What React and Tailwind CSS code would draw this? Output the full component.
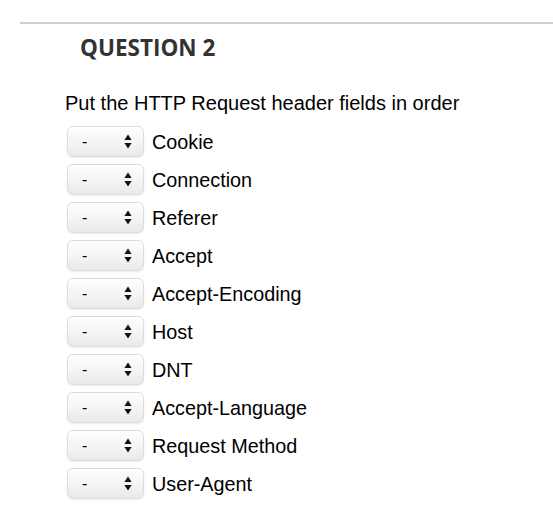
import React from 'react'

const FIELDS = [
  'Cookie',
  'Connection',
  'Referer',
  'Accept',
  'Accept-Encoding',
  'Host',
  'DNT',
  'Accept-Language',
  'Request Method',
  'User-Agent',
]

function Arrows() {
  return (
    <svg width="8" height="15" viewBox="0 0 8 15" className="shrink-0">
      <path d="M4 0.5 L7.6 6 L0.4 6 Z" fill="#111" />
      <path d="M4 14.5 L7.6 9 L0.4 9 Z" fill="#111" />
    </svg>
  )
}

function FakeSelect() {
  return (
    <div className="w-[77px] h-[31px] shrink-0 rounded-[6px] border border-[#dcdcdc] bg-gradient-to-b from-[#fefefe] via-[#f5f5f5] to-[#e9e9e9] shadow-[inset_0_1px_0_#fff,0_1px_2px_rgba(0,0,0,0.08)] flex items-center justify-between pl-[14px] pr-[11px]">
      <span className="text-[16px] leading-none text-black">-</span>
      <Arrows />
    </div>
  )
}

export default function App() {
  return (
    <div className="w-[553px] h-[526px] bg-white font-['Liberation_Sans',Arial,sans-serif] overflow-hidden">
      <div className="pt-[22px] pl-[20px]">
        <div className="h-[2px] bg-[#d0d0d0]" />
      </div>

      {/* Question heading */}
      <h2 className="mt-[10px] ml-[80px] font-['Open_Sans',sans-serif] font-bold text-[22.5px] leading-[28px] text-[#333]">
        QUESTION 2
      </h2>

      <div className="pl-[65px]">
        <p className="mt-[29px] text-[20px] leading-[24px] text-black">
          Put the HTTP Request header fields in order
        </p>

        <div className="mt-[11px] flex flex-col gap-[7px] pl-[2px]">
          {FIELDS.map((f) => (
            <div key={f} className="flex items-center gap-[8px]">
              <FakeSelect />
              <span className="text-[19.8px] leading-[24px] text-black">{f}</span>
            </div>
          ))}
        </div>
      </div>
    </div>
  )
}
